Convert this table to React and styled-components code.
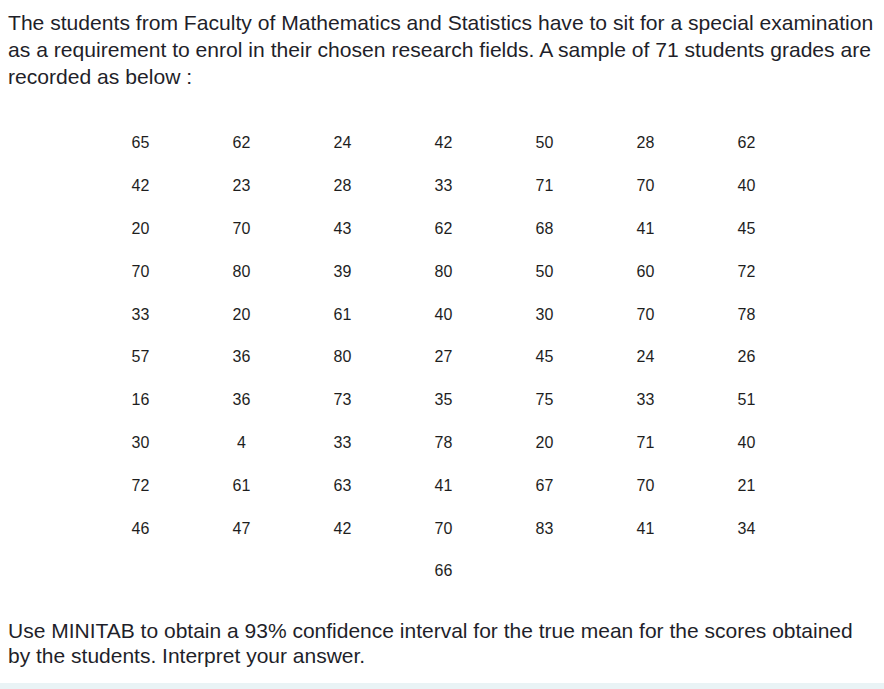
import React from "react";
import styled, { createGlobalStyle } from "styled-components";

const Global = createGlobalStyle`
  html, body { margin: 0; padding: 0; background: #ffffff; }
  body { font-family: "Liberation Sans", Arial, sans-serif; }
`;

const Page = styled.div`
  width: 884px;
  height: 689px;
  display: flex;
  flex-direction: column;
  background: #ffffff;
  overflow: hidden;
`;

const Content = styled.div`
  flex: 1;
  padding: 9px 8px 0 8px;
`;

const Intro = styled.p`
  margin: 0;
  font-family: "Liberation Sans", Arial, sans-serif;
  font-size: 21.1px;
  line-height: 27px;
  color: #1f1f2a;
`;

const Grid = styled.div`
  display: grid;
  grid-template-columns: repeat(7, 101px);
  grid-auto-rows: 42.8px;
  margin: 32px 0 0 82px;
`;

const Cell = styled.div`
  display: flex;
  align-items: center;
  justify-content: center;
  font-family: "Liberation Sans", Arial, sans-serif;
  font-size: 16px;
  color: #1e1e1e;
  grid-column: ${(p) => p.$col || "auto"};
`;

const Question = styled.p`
  margin: 25px 0 0 0;
  font-family: "Liberation Sans", Arial, sans-serif;
  font-size: 21px;
  line-height: 25px;
  color: #1f1f2a;
`;

const Footer = styled.div`
  height: 6px;
  background: #e9f3f5;
`;

const rows = [
  [65, 62, 24, 42, 50, 28, 62],
  [42, 23, 28, 33, 71, 70, 40],
  [20, 70, 43, 62, 68, 41, 45],
  [70, 80, 39, 80, 50, 60, 72],
  [33, 20, 61, 40, 30, 70, 78],
  [57, 36, 80, 27, 45, 24, 26],
  [16, 36, 73, 35, 75, 33, 51],
  [30, 4, 33, 78, 20, 71, 40],
  [72, 61, 63, 41, 67, 70, 21],
  [46, 47, 42, 70, 83, 41, 34],
];

export default function App() {
  return (
    <>
      <Global />
      <Page>
        <Content>
          <Intro>
            The students from Faculty of Mathematics and Statistics have to sit for a special examination
            as a requirement to enrol in their chosen research fields. A sample of 71 students grades are
            recorded as below :
          </Intro>
          <Grid>
            {rows.flatMap((r, i) => r.map((v, j) => <Cell key={`${i}-${j}`}>{v}</Cell>))}
            <Cell $col={4}>66</Cell>
          </Grid>
          <Question>
            Use MINITAB to obtain a 93% confidence interval for the true mean for the scores obtained
            by the students. Interpret your answer.
          </Question>
        </Content>
        <Footer />
      </Page>
    </>
  );
}
